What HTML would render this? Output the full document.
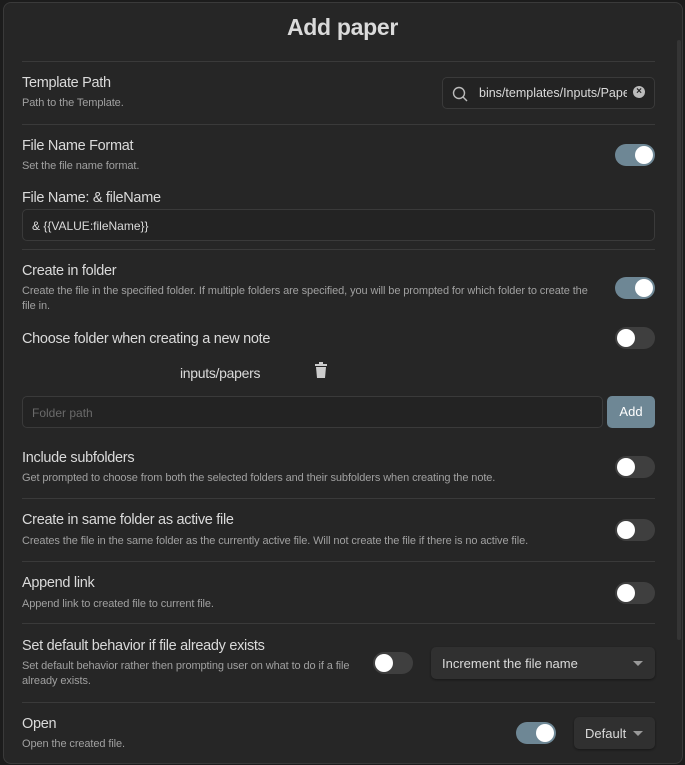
<!DOCTYPE html>
<html><head><style>
*{margin:0;padding:0;box-sizing:border-box}
body{width:685px;height:765px;background:#1c1c1c;font-family:"Liberation Sans",sans-serif;position:relative;overflow:hidden}
.m{position:absolute;left:3px;top:2px;width:680px;height:762px;background:#262626;border:1px solid #3a3a3a;border-radius:8px}
.a{position:absolute}
.t{position:absolute;left:22px;color:#dadada;font-size:14.5px;letter-spacing:-0.3px}
.d{position:absolute;left:22px;color:#a0a0a0;font-size:11px;line-height:15px;letter-spacing:-0.1px}
.h{position:absolute;left:22px;width:633px;height:1px;background:#3a3a3a}
.tg{position:absolute;width:40px;height:22px;border-radius:11px;background:#3f3f3f}
.tg.on{background:#6e8795}
.tg::after{content:"";position:absolute;top:2px;left:2px;width:18px;height:18px;border-radius:50%;background:#fff}
.tg.on::after{left:20px}
.in{position:absolute;border:1px solid #3a3a3a;border-radius:5px;background:#232323;color:#dadada;font-size:12px}
.sel{position:absolute;background:#303030;border-radius:5px;color:#dadada;font-size:13px;box-shadow:0 1px 2px rgba(0,0,0,.4)}
.car{position:absolute;right:12px;top:14px;width:0;height:0;border-left:5px solid transparent;border-right:5px solid transparent;border-top:5px solid #999}
</style></head><body>
<div class="m"></div>
<div class="a" style="left:677px;top:40px;width:4px;height:600px;background:#353535;border-radius:2px"></div>
<div class="a" style="left:0;width:685px;top:14px;text-align:center;color:#dadada;font-size:23px;font-weight:bold;letter-spacing:-0.3px">Add paper</div>
<div class="h" style="top:61px"></div>

<div class="t" style="top:75px">Template Path</div>
<div class="d" style="top:96px">Path to the Template.</div>
<div class="in" style="left:442px;top:77px;width:213px;height:32px">
<svg class="a" style="left:9px;top:8px" width="16" height="16" viewBox="0 0 16 16"><circle cx="7" cy="7" r="5.5" stroke="#bbb" stroke-width="1.4" fill="none"/><line x1="11" y1="11" x2="15" y2="15" stroke="#bbb" stroke-width="1.4"/></svg>
<span class="a" style="left:36px;top:8px;font-size:12.5px;white-space:nowrap;width:148px;overflow:hidden">bins/templates/Inputs/Papers</span>
<div class="a" style="left:190px;top:8px;width:12px;height:12px;border-radius:50%;background:#bbb;color:#232323;font-size:10px;line-height:12px;text-align:center;font-weight:bold">×</div>
</div>
<div class="h" style="top:124px"></div>

<div class="t" style="top:138px">File Name Format</div>
<div class="d" style="top:159px">Set the file name format.</div>
<div class="tg on" style="left:615px;top:144px"></div>
<div class="t" style="top:190px">File Name: &amp; fileName</div>
<div class="in" style="left:22px;top:209px;width:633px;height:32px"><span class="a" style="left:9px;top:9px">&amp; {{VALUE:fileName}}</span></div>
<div class="h" style="top:249px"></div>

<div class="t" style="top:263px">Create in folder</div>
<div class="d" style="top:284px;width:572px">Create the file in the specified folder. If multiple folders are specified, you will be prompted for which folder to create the file in.</div>
<div class="tg on" style="left:615px;top:277px"></div>
<div class="t" style="top:331px">Choose folder when creating a new note</div>
<div class="tg" style="left:615px;top:327px"></div>
<div class="a" style="left:180px;top:365px;color:#dadada;font-size:14px;letter-spacing:-0.3px">inputs/papers</div>
<svg class="a" style="left:314px;top:362px" width="14" height="16" viewBox="0 0 14 16"><rect x="1" y="2" width="12" height="2" fill="#ccc"/><rect x="5" y="0" width="4" height="2" fill="#ccc"/><path d="M2 5h10l-1 11H3z" fill="#ccc"/></svg>
<div class="in" style="left:22px;top:396px;width:581px;height:32px"><span class="a" style="left:9px;top:9px;color:#6a6a6a">Folder path</span></div>
<div class="a" style="left:607px;top:396px;width:48px;height:32px;background:#6e8795;border-radius:5px;color:#fff;font-size:13px;text-align:center;line-height:32px">Add</div>

<div class="t" style="top:450px">Include subfolders</div>
<div class="d" style="top:471px">Get prompted to choose from both the selected folders and their subfolders when creating the note.</div>
<div class="tg" style="left:615px;top:456px"></div>
<div class="h" style="top:498px"></div>

<div class="t" style="top:512px">Create in same folder as active file</div>
<div class="d" style="top:534px">Creates the file in the same folder as the currently active file. Will not create the file if there is no active file.</div>
<div class="tg" style="left:615px;top:519px"></div>
<div class="h" style="top:561px"></div>

<div class="t" style="top:575px">Append link</div>
<div class="d" style="top:597px">Append link to created file to current file.</div>
<div class="tg" style="left:615px;top:582px"></div>
<div class="h" style="top:623px"></div>

<div class="t" style="top:638px">Set default behavior if file already exists</div>
<div class="d" style="top:659px;width:340px">Set default behavior rather then prompting user on what to do if a file already exists.</div>
<div class="tg" style="left:373px;top:652px"></div>
<div class="sel" style="left:431px;top:647px;width:224px;height:32px"><span class="a" style="left:11px;top:9px">Increment the file name</span><div class="car"></div></div>
<div class="h" style="top:702px"></div>

<div class="t" style="top:716px">Open</div>
<div class="d" style="top:737px">Open the created file.</div>
<div class="tg on" style="left:516px;top:722px"></div>
<div class="sel" style="left:574px;top:717px;width:81px;height:32px"><span class="a" style="left:11px;top:9px">Default</span><div class="car"></div></div>
</body></html>
